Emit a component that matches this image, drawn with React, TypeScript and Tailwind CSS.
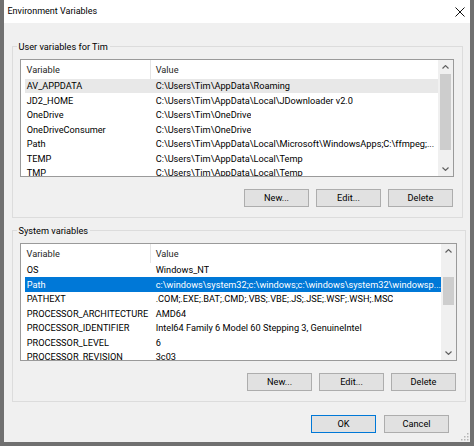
import React from "react";

type Row = [string, string];

const userRows: Row[] = [
  ["AV_APPDATA", "C:\\Users\\Tim\\AppData\\Roaming"],
  ["JD2_HOME", "C:\\Users\\Tim\\AppData\\Local\\JDownloader v2.0"],
  ["OneDrive", "C:\\Users\\Tim\\OneDrive"],
  ["OneDriveConsumer", "C:\\Users\\Tim\\OneDrive"],
  ["Path", "C:\\Users\\Tim\\AppData\\Local\\Microsoft\\WindowsApps;C:\\ffmpeg;..."],
  ["TEMP", "C:\\Users\\Tim\\AppData\\Local\\Temp"],
  ["TMP", "C:\\Users\\Tim\\AppData\\Local\\Temp"],
];

const sysRows: Row[] = [
  ["OS", "Windows_NT"],
  ["Path", "c:\\windows\\system32;c:\\windows;c:\\windows\\system32\\windowsp..."],
  ["PATHEXT", ".COM;.EXE;.BAT;.CMD;.VBS;.VBE;.JS;.JSE;.WSF;.WSH;.MSC"],
  ["PROCESSOR_ARCHITECTURE", "AMD64"],
  ["PROCESSOR_IDENTIFIER", "Intel64 Family 6 Model 60 Stepping 3, GenuineIntel"],
  ["PROCESSOR_LEVEL", "6"],
  ["PROCESSOR_REVISION", "3c03"],
];

function ChevronUp() {
  return (
    <svg width="7" height="4" viewBox="0 0 7 4">
      <polyline points="0.5,3.5 3.5,0.6 6.5,3.5" fill="none" stroke="#606060" strokeWidth="1.2" />
    </svg>
  );
}

function ChevronDown() {
  return (
    <svg width="7" height="4" viewBox="0 0 7 4">
      <polyline points="0.5,0.5 3.5,3.4 6.5,0.5" fill="none" stroke="#606060" strokeWidth="1.2" />
    </svg>
  );
}

function ListBox({
  rows,
  hovered,
  selected,
  thumbOffset,
  thumbHeight,
}: {
  rows: Row[];
  hovered?: number;
  selected?: number;
  thumbOffset: number;
  thumbHeight: number;
}) {
  return (
    <div className="h-[118px] border border-[#9a9a9a] bg-white flex overflow-hidden">
      <div className="flex-1 min-w-0 flex flex-col overflow-hidden">
        <div className="h-[19px] shrink-0 flex text-[#1e1e1e]">
          <div className="w-[130px] shrink-0 pl-[5.5px] flex items-center border-r border-[#e5e5e5]">Variable</div>
          <div className="pl-[4.7px] flex items-center">Value</div>
        </div>
        {rows.map(([name, value], i) => {
          const isSel = i === selected;
          const isHov = i === hovered;
          return (
            <div
              key={i}
              className={
                "h-[14.5px] shrink-0 ml-[4px] flex items-center whitespace-nowrap " +
                (isSel ? "bg-[#0078d7] text-white" : isHov ? "bg-[#e8e8e8]" : "")
              }
            >
              <div className="w-[126px] shrink-0 pl-[1.7px] overflow-hidden">{name}</div>
              <div className="pl-[4.7px] overflow-hidden min-w-0">{value}</div>
            </div>
          );
        })}
      </div>
      <div className="w-[15px] shrink-0 bg-[#f0f0f0] flex flex-col">
        <div className="h-[14px] shrink-0 flex items-center justify-center">
          <ChevronUp />
        </div>
        <div className="shrink-0" style={{ height: thumbOffset }} />
        <div className="shrink-0 mx-[2px] bg-[#cdcdcd]" style={{ height: thumbHeight }} />
        <div className="flex-1" />
        <div className="h-[14px] shrink-0 flex items-center justify-center">
          <ChevronDown />
        </div>
      </div>
    </div>
  );
}

function Btn({ children, def }: { children: React.ReactNode; def?: boolean }) {
  return (
    <div
      className={
        "w-[65px] h-[18px] flex items-center justify-center bg-[#e1e1e1] border " +
        (def ? "border-[#0078d7]" : "border-[#adadad]")
      }
    >
      {children}
    </div>
  );
}

function Group({ title, children, className }: { title: string; children: React.ReactNode; className?: string }) {
  return (
    <fieldset className={"border border-[#dcdcdc] pl-[7px] pr-[8px] pt-[6.3px] pb-[10px] " + (className ?? "")}>
      <legend className="ml-[-3.5px] px-[2px] leading-[12px]">{title}</legend>
      {children}
    </fieldset>
  );
}

export default function App() {
  return (
    <div className="w-[474px] h-[446px] bg-[#707070] px-[4px] pb-[4px] [font-family:Roboto,sans-serif] text-[9.2px] text-black overflow-hidden">
      <div className="relative h-[442px] bg-[#f0f0f0] flex flex-col">
        <div className="h-[23px] shrink-0 bg-white flex items-center justify-between pl-[3.5px] pr-[5px]">
          <span className="text-[9px]">Environment Variables</span>
          <svg width="10" height="10" viewBox="0 0 10 10">
            <line x1="0.5" y1="0.5" x2="9.5" y2="9.5" stroke="#111" strokeWidth="1" />
            <line x1="9.5" y1="0.5" x2="0.5" y2="9.5" stroke="#111" strokeWidth="1" />
          </svg>
        </div>
        <div className="flex-1 flex flex-col pl-[8px] pr-[7px] pt-[17.7px]">
          <Group title="User variables for Tim">
            <ListBox rows={userRows} hovered={0} thumbOffset={0} thumbHeight={76} />
            <div className="mt-[11.7px] flex justify-end gap-[7px] pr-[1px]">
              <Btn>New...</Btn>
              <Btn>Edit...</Btn>
              <Btn>Delete</Btn>
            </div>
          </Group>
          <Group title="System variables" className="mt-[7px]">
            <ListBox rows={sysRows} selected={1} thumbOffset={19} thumbHeight={28} />
            <div className="mt-[11.7px] flex justify-end gap-[7px] pr-[1px]">
              <Btn>New...</Btn>
              <Btn>Edit...</Btn>
              <Btn>Delete</Btn>
            </div>
          </Group>
          <div className="mt-[13.6px] flex justify-end gap-[8px] pr-[14px]">
            <Btn def>OK</Btn>
            <Btn>Cancel</Btn>
          </div>
        </div>
        <svg className="absolute right-[1px] bottom-[1px]" width="8" height="8" viewBox="0 0 8 8">
          <rect x="6" y="0" width="1.5" height="1.5" fill="#b5b5b5" />
          <rect x="3" y="3" width="1.5" height="1.5" fill="#b5b5b5" />
          <rect x="6" y="3" width="1.5" height="1.5" fill="#b5b5b5" />
          <rect x="0" y="6" width="1.5" height="1.5" fill="#b5b5b5" />
          <rect x="3" y="6" width="1.5" height="1.5" fill="#b5b5b5" />
          <rect x="6" y="6" width="1.5" height="1.5" fill="#b5b5b5" />
        </svg>
      </div>
    </div>
  );
}
